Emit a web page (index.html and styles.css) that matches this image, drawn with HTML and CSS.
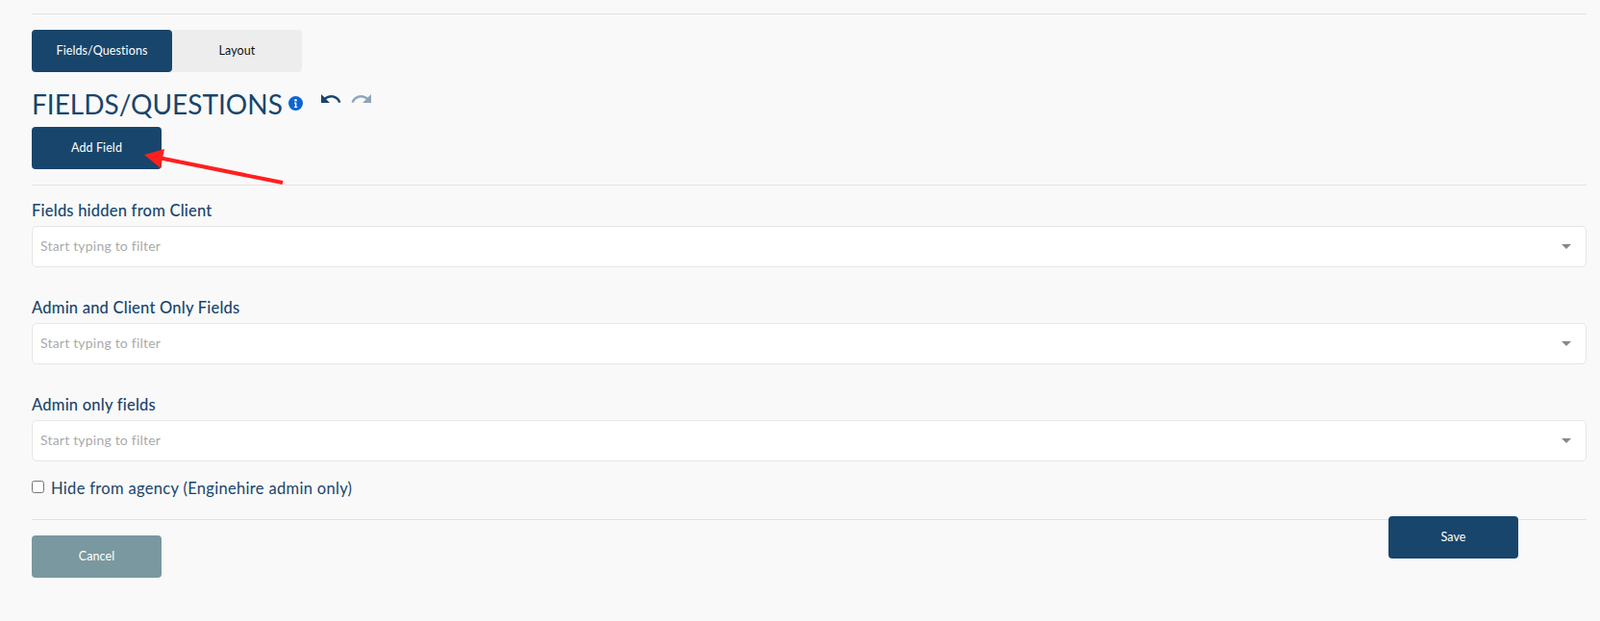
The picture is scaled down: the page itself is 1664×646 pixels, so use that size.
FILE: index.html
```html
<!DOCTYPE html>
<html lang="en">
<head>
<meta charset="utf-8">
<title>Fields/Questions</title>
<link rel="stylesheet" href="styles.css">
</head>
<body>
<main class="page">
  <hr class="rule rule-top">
  <div class="tabs">
    <button class="tab tab-active">Fields/Questions</button>
    <button class="tab tab-idle">Layout</button>
  </div>
  <div class="title-row">
    <h1 class="title">FIELDS/QUESTIONS</h1>
    <svg class="info" viewBox="0 0 16 16" width="15" height="15"><circle cx="8" cy="8" r="8" fill="#0b66d0"/><circle cx="8" cy="4.6" r="1.3" fill="#fff"/><path d="M6.4 7h2.5v4.6h1v1.2H6.3v-1.2h1V8.2h-.9z" fill="#fff"/></svg>
    <svg class="history" viewBox="0 0 24 24" width="24" height="24"><path fill="#18456b" d="M12.5 8c-2.65 0-5.05.99-6.9 2.6L2 7v9h9l-3.62-3.62c1.39-1.16 3.16-1.88 5.12-1.88 3.54 0 6.55 2.31 7.6 5.5l2.37-.78C21.08 11.03 17.15 8 12.5 8z"/></svg>
    <svg class="history" viewBox="0 0 24 24" width="24" height="24"><path fill="#8ea5ba" d="M18.4 10.6C16.55 8.99 14.15 8 11.5 8c-4.65 0-8.58 3.03-9.96 7.22l2.37.78c1.05-3.19 4.06-5.5 7.59-5.5 1.96 0 3.73.72 5.12 1.88L13 16h9V7z"/></svg>
  </div>
  <button class="btn btn-primary">Add Field</button>
  <hr class="rule rule-mid">
  <section class="field field-first">
    <label class="field-label">Fields hidden from Client</label>
    <div class="select"><span class="placeholder">Start typing to filter</span><span class="caret"></span></div>
  </section>
  <section class="field">
    <label class="field-label">Admin and Client Only Fields</label>
    <div class="select"><span class="placeholder">Start typing to filter</span><span class="caret"></span></div>
  </section>
  <section class="field">
    <label class="field-label">Admin only fields</label>
    <div class="select"><span class="placeholder">Start typing to filter</span><span class="caret"></span></div>
  </section>
  <label class="check-row"><input class="check" type="checkbox"><span>Hide from agency (Enginehire admin only)</span></label>
  <hr class="rule rule-bottom">
  <div class="footer">
    <button class="btn btn-muted">Cancel</button>
    <button class="btn btn-primary btn-save">Save</button>
  </div>
  <svg class="arrow" viewBox="0 0 300 200" width="300" height="200"><path d="M294 190 L160 163" stroke="#ff1f1f" stroke-width="4" fill="none"/><path d="M150 161 L171 155 L167 175 Z" fill="#ff1f1f"/></svg>
</main>
</body>
</html>
```
FILE: styles.css
```css
* { box-sizing: border-box; }
html, body { margin: 0; height: 100%; }
body {
  background: #f9f9f9;
  font-family: "Lato", "Noto Sans", sans-serif;
  color: #18456b;
  overflow: hidden;
}
.page { position: relative; padding: 14px 14px 0 33px; }
.rule { border: 0; height: 1px; margin: 0; background: #e2e2e2; }
.tabs { display: flex; margin-top: 16px; }
.tab {
  height: 44px; border: 0; font: inherit; font-size: 12.5px; padding: 0 0 2px;
  letter-spacing: 0.1px;
}
.tab-active { width: 146px; background: #18456b; color: #fff; border-radius: 4px; }
.tab-idle { width: 135px; background: #ededed; color: #111; border-radius: 0 4px 4px 0; }
.title-row { display: flex; align-items: flex-start; height: 57px; }
.title {
  margin: 16px 0 0 0; font-size: 28px; line-height: 34px; font-weight: 400;
}
.info { margin: 25px 0 0 6px; }
.history { margin-top: 16px; }
.info + .history { margin-left: 17px; }
.history + .history { margin-left: 8px; }
.btn {
  display: block; width: 135px; height: 44px; border: 0; border-radius: 4px;
  font: inherit; font-size: 12.5px; color: #fff; padding: 0 0 2px; letter-spacing: 0.1px;
}
.btn-primary { background: #18456b; }
.btn-muted { background: #7a989f; }
.rule-mid { margin-top: 16px; }
.field { margin-top: 30px; }
.field-first { margin-top: 14px; }
.field-label { display: block; font-size: 16.5px; line-height: 24px; font-weight: 500; margin-bottom: 4px; letter-spacing: 0.22px; }
.select {
  display: flex; align-items: center; justify-content: space-between;
  height: 43px; background: #fff; border: 1px solid #e6e6e6; border-radius: 5px;
  padding: 0 15px 0 8px;
}
.placeholder { font-size: 14px; color: #aaa; letter-spacing: 0.2px; padding-bottom: 2px; }
.caret { width: 0; height: 0; border-left: 5px solid transparent; border-right: 5px solid transparent; border-top: 5px solid #888; }
.check-row { display: flex; align-items: flex-start; margin-top: 16px; height: 24px; font-size: 16.5px; line-height: 24px; letter-spacing: 0.32px; }
.check { width: 13px; height: 13px; margin: 4px 7px 0 0; }
.rule-bottom { margin-top: 20px; }
.footer { display: flex; justify-content: space-between; align-items: flex-start; padding-top: 16px; }
.btn-save { margin: -20px 71px 0 0; }
.arrow { position: absolute; left: 0; top: 0; pointer-events: none; }
```
